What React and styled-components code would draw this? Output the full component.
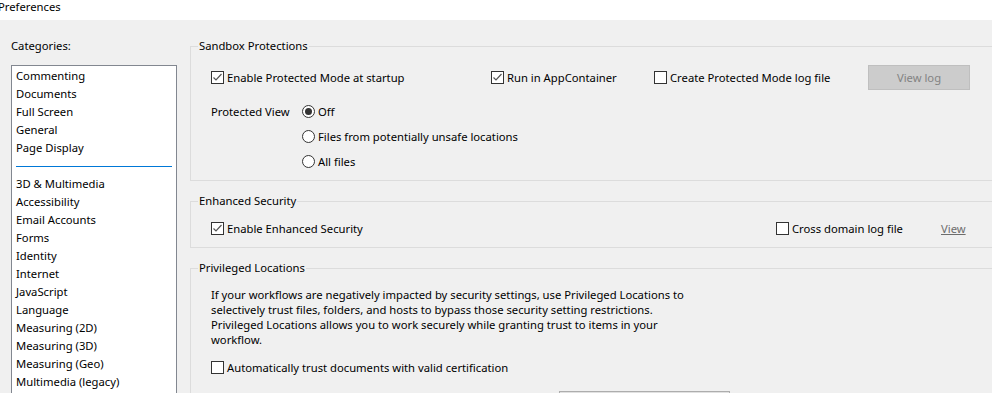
import React from "react";
import styled, { createGlobalStyle } from "styled-components";

const Global = createGlobalStyle`
  html, body { margin: 0; padding: 0; }
  body {
    background: #f0f0f0;
    overflow: hidden;
    font-family: "Noto Sans", "Open Sans", sans-serif;
    font-size: 11.25px;
    color: #000;
  }
`;

const Window = styled.div`
  width: 992px;
  height: 393px;
  overflow: hidden;
  display: flex;
  flex-direction: column;
`;

const TitleBar = styled.div`
  height: 20px;
  flex: 0 0 20px;
  background: #fff;
  line-height: 13px;
  text-indent: -2px;
  white-space: nowrap;
`;

const Body = styled.div`
  display: flex;
  flex: 1;
  min-height: 0;
`;

const Sidebar = styled.div`
  flex: 0 0 179px;
  padding: 18px 0 0 11px;
`;

const SideLabel = styled.div`
  height: 16px;
  line-height: 16px;
  margin-bottom: 11px;
`;

const List = styled.div`
  width: 160px;
  height: 400px;
  border: 1px solid #828790;
  background: #fff;
  padding: 1px 0 0 4px;
  box-sizing: content-box;
  overflow: hidden;
`;

const ListItem = styled.div`
  height: 18px;
  line-height: 18px;
  white-space: nowrap;
`;

const ListSeparator = styled.div`
  height: 18px;
  display: flex;
  align-items: center;
  padding-right: 4px;
  &::after {
    content: "";
    flex: 1;
    height: 1px;
    background: #0078d7;
  }
`;

const Main = styled.div`
  flex: 0 0 830px;
  padding-top: 26px;
  display: flex;
  flex-direction: column;
  gap: 20px;
`;

const Group = styled.div`
  position: relative;
  border: 1px solid #dcdcdc;
  padding: ${(p) => p.$pad};
`;

const Legend = styled.div`
  position: absolute;
  top: -9px;
  left: 7px;
  padding: 0 1px;
  line-height: 16px;
  background: #f0f0f0;
  white-space: nowrap;
`;

const TopRow = styled.div`
  display: grid;
  grid-template-columns: 280px 163px 214px 102px;
  align-items: center;
  height: 24px;
`;

const Option = styled.label`
  display: flex;
  align-items: center;
  gap: 3px;
  white-space: nowrap;
  height: 20px;
`;

const DisabledButton = styled.div`
  width: 102px;
  height: 25px;
  box-sizing: border-box;
  margin-top: 1px;
  background: #cccccc;
  border: 1px solid #bfbfbf;
  color: #838383;
  display: flex;
  align-items: center;
  justify-content: center;
`;

const ViewGrid = styled.div`
  display: grid;
  grid-template-columns: 91px auto;
  grid-auto-rows: 25px;
  align-items: center;
  margin-top: 11px;
`;

const FieldLabel = styled.span`
  white-space: nowrap;
`;

const EnhancedRow = styled.div`
  display: grid;
  grid-template-columns: 565px 165px auto;
  align-items: center;
  height: 20px;
`;

const LinkText = styled.span`
  color: #6d6d6d;
  text-decoration: underline;
`;

const Paragraph = styled.p`
  margin: 0;
  line-height: 15px;
  white-space: nowrap;
`;

const TrustRow = styled.div`
  margin-top: 10px;
`;

const PlainButton = styled.div`
  margin: 14px 0 0 348px;
  width: 171px;
  height: 23px;
  box-sizing: border-box;
  background: #e1e1e1;
  border: 1px solid #adadad;
`;

const Checkbox = ({ checked }) => (
  <svg width="13" height="13" viewBox="0 0 13 13" style={{ flex: "0 0 13px" }}>
    <rect x="0.5" y="0.5" width="12" height="12" fill="#fff" stroke="#333" />
    {checked && (
      <polyline
        points="2.5,6.5 5,9 10.5,3"
        fill="none"
        stroke="#555"
        strokeWidth="1.2"
      />
    )}
  </svg>
);

const Radio = ({ checked }) => (
  <svg width="13" height="13" viewBox="0 0 13 13" style={{ flex: "0 0 13px" }}>
    <circle cx="6.5" cy="6.5" r="6" fill="#fff" stroke="#333" />
    {checked && <circle cx="6.5" cy="6.5" r="3.5" fill="#333" />}
  </svg>
);

const topCats = ["Commenting", "Documents", "Full Screen", "General", "Page Display"];
const moreCats = [
  "3D & Multimedia",
  "Accessibility",
  "Email Accounts",
  "Forms",
  "Identity",
  "Internet",
  "JavaScript",
  "Language",
  "Measuring (2D)",
  "Measuring (3D)",
  "Measuring (Geo)",
  "Multimedia (legacy)",
];

export default function App() {
  return (
    <>
      <Global />
      <Window>
        <TitleBar>Preferences</TitleBar>
        <Body>
          <Sidebar>
            <SideLabel>Categories:</SideLabel>
            <List>
              {topCats.map((c) => (
                <ListItem key={c}>{c}</ListItem>
              ))}
              <ListSeparator />
              {moreCats.map((c) => (
                <ListItem key={c}>{c}</ListItem>
              ))}
            </List>
          </Sidebar>
          <Main>
            <Group $pad="17px 20px 6px 20px">
              <Legend>Sandbox Protections</Legend>
              <TopRow>
                <Option>
                  <Checkbox checked />
                  Enable Protected Mode at startup
                </Option>
                <Option>
                  <Checkbox checked />
                  Run in AppContainer
                </Option>
                <Option>
                  <Checkbox />
                  Create Protected Mode log file
                </Option>
                <DisabledButton>View log</DisabledButton>
              </TopRow>
              <ViewGrid>
                <FieldLabel>Protected View</FieldLabel>
                <Option>
                  <Radio checked />
                  Off
                </Option>
                <span />
                <Option>
                  <Radio />
                  Files from potentially unsafe locations
                </Option>
                <span />
                <Option>
                  <Radio />
                  All files
                </Option>
              </ViewGrid>
            </Group>
            <Group $pad="16px 20px 9px 20px">
              <Legend>Enhanced Security</Legend>
              <EnhancedRow>
                <Option>
                  <Checkbox checked />
                  Enable Enhanced Security
                </Option>
                <Option>
                  <Checkbox />
                  Cross domain log file
                </Option>
                <LinkText>View</LinkText>
              </EnhancedRow>
            </Group>
            <Group $pad="18px 20px 20px 20px">
              <Legend>Privileged Locations</Legend>
              <Paragraph>
                If your workflows are negatively impacted by security settings, use Privileged Locations to
                <br />
                selectively trust files, folders, and hosts to bypass those security setting restrictions.
                <br />
                Privileged Locations allows you to work securely while granting trust to items in your
                <br />
                workflow.
              </Paragraph>
              <TrustRow>
                <Option>
                  <Checkbox />
                  Automatically trust documents with valid certification
                </Option>
              </TrustRow>
              <PlainButton />
            </Group>
          </Main>
        </Body>
      </Window>
    </>
  );
}
